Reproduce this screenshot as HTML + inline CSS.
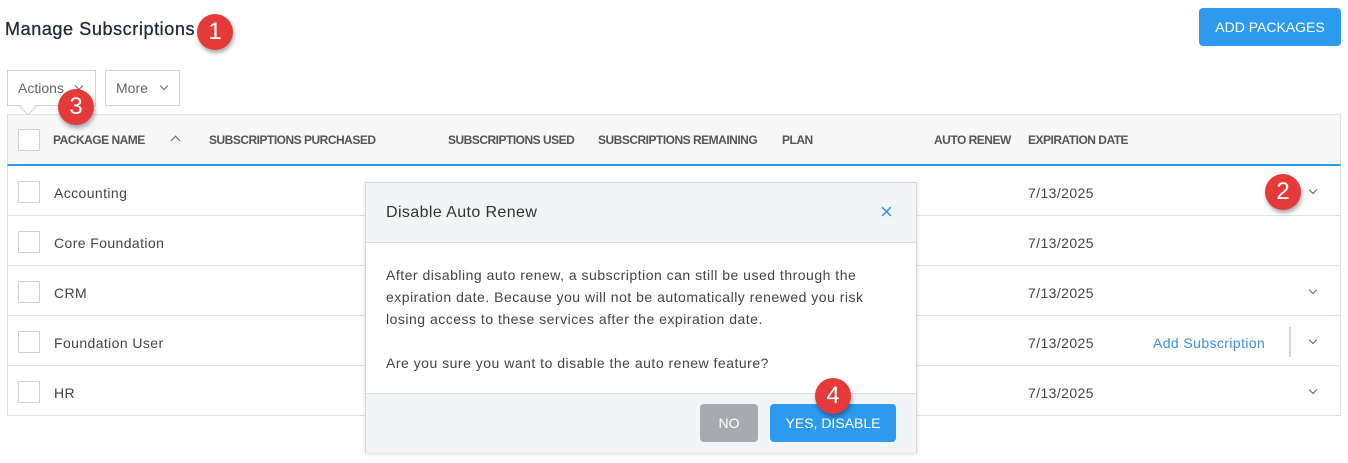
<!DOCTYPE html>
<html><head><meta charset="utf-8"><style>
*{box-sizing:border-box;margin:0;padding:0}
body{width:1348px;height:463px;background:#fff;font-family:"Liberation Sans",sans-serif;color:#444;position:relative;overflow:hidden}
.a{position:absolute}
.title{left:5px;top:19px;font-size:18px;color:#1f2a3a;letter-spacing:0.6px;-webkit-text-stroke:0.3px #1f2a3a}
.btn{background:#2c9af0;color:#fff;border-radius:4px;text-align:center;font-size:14px}
.dd{border:1px solid #ccd3da;background:#fff;font-size:14px;color:#666;height:36px;line-height:34px;padding-left:10px}
.badge{width:36px;height:36px;border-radius:50%;background:#e53a3a;color:#fff;font-size:24px;text-align:center;line-height:36px;box-shadow:1px 3px 4px rgba(0,0,0,.35)}
.th{font-size:12px;font-weight:bold;color:#555;letter-spacing:-0.5px;top:133px}
.cb{width:22px;height:22px;border:1px solid #ccd3da;background:#fff}
.row{left:7px;width:1334px;height:50px;border-bottom:1px solid #dde2e8;border-left:1px solid #dde2e8;border-right:1px solid #dde2e8}
.cell{font-size:14px;color:#444;letter-spacing:0.4px}
.chev{width:8px;height:8px;border-right:1.5px solid #666;border-bottom:1.5px solid #666;transform:rotate(45deg)}
</style></head><body>
<div class="a title">Manage Subscriptions</div>
<div class="a btn" style="left:1199px;top:8px;width:142px;height:38px;line-height:38px">ADD PACKAGES</div>

<div class="a dd" style="left:7px;top:70px;width:89px">Actions <span class="a chev" style="left:68px;top:12px;width:6px;height:6px"></span></div>
<div class="a" style="left:22px;top:101px;width:12px;height:12px;background:#fff;border-right:1px solid #ccd3da;border-bottom:1px solid #ccd3da;transform:rotate(45deg);z-index:2"></div>
<div class="a dd" style="left:105px;top:70px;width:75px">More <span class="a chev" style="left:55px;top:12px;width:6px;height:6px"></span></div>

<div class="a" style="left:7px;top:114px;width:1334px;height:52px;background:#f7f7f7;border:1px solid #dde2e8;border-bottom:2px solid #2c9af0"></div>
<div class="a cb" style="left:18px;top:129px"></div>
<div class="a th" style="left:53px">PACKAGE NAME</div>
<div class="a chev" style="left:172px;top:137px;width:7px;height:7px;transform:rotate(225deg)"></div>
<div class="a th" style="left:209px">SUBSCRIPTIONS PURCHASED</div>
<div class="a th" style="left:448px">SUBSCRIPTIONS USED</div>
<div class="a th" style="left:598px">SUBSCRIPTIONS REMAINING</div>
<div class="a th" style="left:782px">PLAN</div>
<div class="a th" style="left:934px">AUTO RENEW</div>
<div class="a th" style="left:1028px">EXPIRATION DATE</div>

<div class="a row" style="top:166px"></div>
<div class="a row" style="top:216px"></div>
<div class="a row" style="top:266px"></div>
<div class="a row" style="top:316px"></div>
<div class="a row" style="top:366px"></div>

<div class="a cb" style="left:18px;top:181px"></div><div class="a cell" style="left:54px;top:185px">Accounting</div><div class="a cell" style="left:1028px;top:185px">7/13/2025</div>
<div class="a cb" style="left:18px;top:231px"></div><div class="a cell" style="left:54px;top:235px">Core Foundation</div><div class="a cell" style="left:1028px;top:235px">7/13/2025</div>
<div class="a cb" style="left:18px;top:281px"></div><div class="a cell" style="left:54px;top:285px">CRM</div><div class="a cell" style="left:1028px;top:285px">7/13/2025</div>
<div class="a cb" style="left:18px;top:331px"></div><div class="a cell" style="left:54px;top:335px">Foundation User</div><div class="a cell" style="left:1028px;top:335px">7/13/2025</div>
<div class="a cb" style="left:18px;top:381px"></div><div class="a cell" style="left:54px;top:385px">HR</div><div class="a cell" style="left:1028px;top:385px">7/13/2025</div>
<div class="a cell" style="left:1153px;top:335px;color:#3a8ee6">Add Subscription</div>
<div class="a" style="left:1289px;top:327px;width:2px;height:30px;background:#d0d6dd"></div>
<div class="a chev" style="left:1310px;top:187px;width:6px;height:6px"></div>
<div class="a chev" style="left:1310px;top:287px;width:6px;height:6px"></div>
<div class="a chev" style="left:1310px;top:337px;width:6px;height:6px"></div>
<div class="a chev" style="left:1310px;top:387px;width:6px;height:6px"></div>

<div class="a" style="left:365px;top:182px;width:552px;height:271px;background:#fff;border:1px solid #d4d8dd;box-shadow:0 1px 4px rgba(0,0,0,.15)">
 <div class="a" style="left:0;top:0;width:550px;height:60px;background:#f3f4f6;border-bottom:1px solid #d8dde3"></div>
 <div class="a" style="left:20px;top:21px;font-size:16px;color:#333;letter-spacing:0.4px">Disable Auto Renew</div>
 <div class="a" style="left:514px;top:16px;font-size:22px;color:#2c9af0">×</div>
 <div class="a" style="left:20px;top:81px;width:500px;font-size:14px;line-height:22px;color:#444;letter-spacing:0.5px">After disabling auto renew, a subscription can still be used through the expiration date. Because you will not be automatically renewed you risk losing access to these services after the expiration date.<br><br>Are you sure you want to disable the auto renew feature?</div>
 <div class="a" style="left:0;top:210px;width:550px;height:60px;background:#f3f4f6;border-top:1px solid #d8dde3"></div>
 <div class="a btn" style="left:334px;top:221px;width:58px;height:38px;line-height:38px;background:#a7aaae">NO</div>
 <div class="a btn" style="left:404px;top:221px;width:126px;height:38px;line-height:38px">YES, DISABLE</div>
</div>

<div class="a badge" style="left:197px;top:14px">1</div>
<div class="a badge" style="left:1265px;top:174px">2</div>
<div class="a badge" style="left:58px;top:89px;z-index:3">3</div>
<div class="a badge" style="left:815px;top:378px">4</div>
</body></html>
